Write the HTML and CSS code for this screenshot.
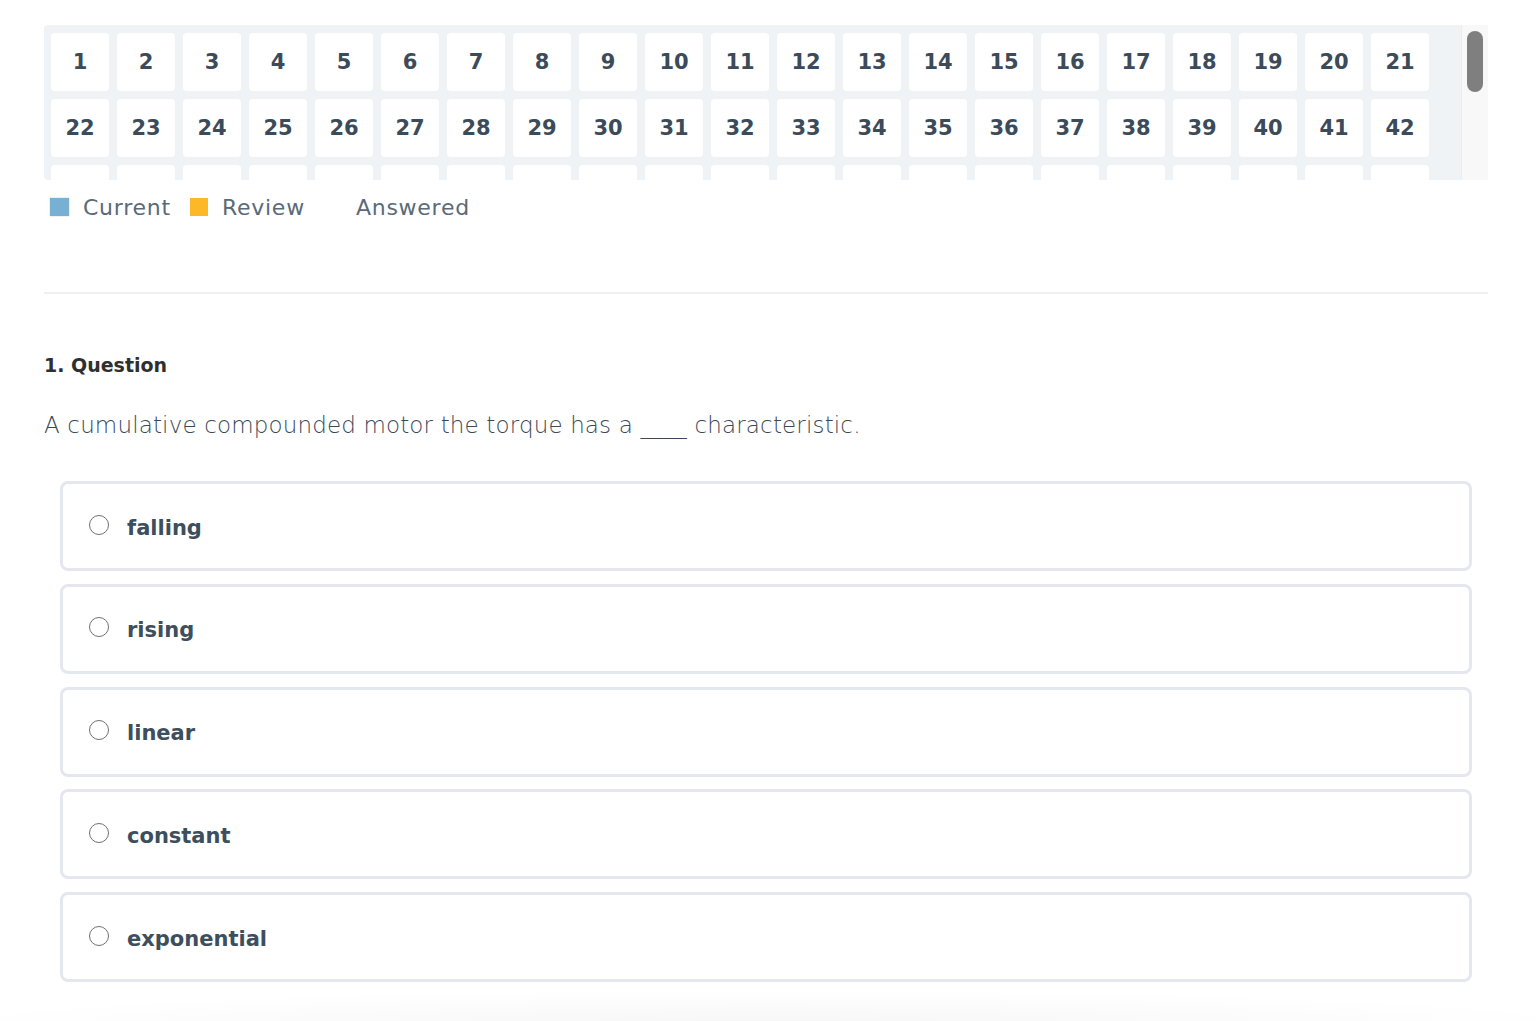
FILE: index.html
```html
<!DOCTYPE html>
<html lang="en">
<head>
    <meta charset="UTF-8">
    <meta name="viewport" content="width=device-width, initial-scale=1.0">
    <title>Quiz</title>
    <link rel="stylesheet" href="styles.css">
</head>
<body>
    <div class="page">
        <div class="palette">
            <ul class="palette-grid">
                <li>1</li><li>2</li><li>3</li><li>4</li><li>5</li><li>6</li><li>7</li>
                <li>8</li><li>9</li><li>10</li><li>11</li><li>12</li><li>13</li><li>14</li>
                <li>15</li><li>16</li><li>17</li><li>18</li><li>19</li><li>20</li><li>21</li>
                <li>22</li><li>23</li><li>24</li><li>25</li><li>26</li><li>27</li><li>28</li>
                <li>29</li><li>30</li><li>31</li><li>32</li><li>33</li><li>34</li><li>35</li>
                <li>36</li><li>37</li><li>38</li><li>39</li><li>40</li><li>41</li><li>42</li>
                <!-- third row only peeks out above the fold of the scroll box -->
                <li></li><li></li><li></li><li></li><li></li><li></li><li></li>
                <li></li><li></li><li></li><li></li><li></li><li></li><li></li>
                <li></li><li></li><li></li><li></li><li></li><li></li><li></li>
            </ul>
            <div class="palette-scroll"><div class="palette-thumb"></div></div>
        </div>

        <div class="legend">
            <span class="legend-box current"></span><span class="legend-label">Current</span>
            <span class="legend-box review"></span><span class="legend-label">Review</span>
            <span class="legend-box answered"></span><span class="legend-label">Answered</span>
        </div>

        <div class="divider"></div>

        <div class="question">
            <h2 class="question-title">1. Question</h2>
            <p class="question-text">A cumulative compounded motor the torque has a ____ characteristic.</p>

            <ul class="answers">
                <li class="answer"><span class="radio"></span><span class="answer-label">falling</span></li>
                <li class="answer"><span class="radio"></span><span class="answer-label">rising</span></li>
                <li class="answer"><span class="radio"></span><span class="answer-label">linear</span></li>
                <li class="answer"><span class="radio"></span><span class="answer-label">constant</span></li>
                <li class="answer"><span class="radio"></span><span class="answer-label">exponential</span></li>
            </ul>
        </div>

        <div class="footer-shade"></div>
    </div>
</body>
</html>
```

FILE: styles.css
```css
body {
    margin: 0;
    font-family: 'DejaVu Sans', 'Open Sans', sans-serif;
    background-color: #ffffff;
    color: #3c4d5c;
    overflow: hidden;
}

.page {
    padding: 25px 48px 0 44px;
}

/* --- Question palette --- */
.palette {
    display: flex;
    height: 155px;
    background-color: #f0f3f6;
    border-radius: 4px 0 0 4px;
}

.palette-grid {
    flex: 1;
    list-style: none;
    margin: 0;
    padding: 8px 0 0 7px;
    display: flex;
    flex-wrap: wrap;
    align-content: flex-start;
    gap: 8px;
    overflow: hidden;
}

.palette-grid li {
    width: 58px;
    height: 58px;
    background-color: #ffffff;
    border-radius: 4px;
    display: flex;
    align-items: center;
    justify-content: center;
    font-size: 21px;
    font-weight: 700;
    color: #3b4b5a;
}

.palette-scroll {
    width: 26px;
    background-color: #f8f8f8;
    border-left: 1px solid #ececec;
}

.palette-thumb {
    width: 16px;
    height: 61px;
    margin: 6px 0 0 5px;
    border-radius: 8px;
    background-color: #7f7f7f;
}

/* --- Legend --- */
.legend {
    display: flex;
    align-items: center;
    height: 30px;
    margin-top: 12px;
    padding-left: 6px;
    font-size: 22px;
    letter-spacing: 0.75px;
    color: #5a6a78;
}

.legend-box {
    width: 18px;
    height: 18px;
    margin-right: 14px;
}

.legend-box.current {
    width: 19px;
    background-color: #7aafd4;
    box-shadow: 0 0 1px rgba(0, 0, 0, 0.35);
}

.legend-box.review {
    background-color: #fdb827;
}

.legend-box.answered {
    background-color: #ffffff;
}

.legend-label {
    margin-right: 19px;
}

.divider {
    height: 2px;
    margin-top: 70px;
    background-color: #eef0f3;
}

/* --- Question --- */
.question-title {
    margin: 57px 0 0 0;
    font-size: 19px;
    line-height: 28px;
    font-weight: 700;
    color: #2f2f2f;
}

.question-text {
    margin: 30px 0 0 0;
    font-size: 23px;
    line-height: 32px;
    font-weight: 300;
    letter-spacing: 0.15px;
    color: #3a4957;
}

.answers {
    list-style: none;
    margin: 40px 16px 0 16px;
    padding: 0;
    display: flex;
    flex-direction: column;
    gap: 12.75px;
}

.answer {
    height: 90px;
    box-sizing: border-box;
    border: 3px solid #e4e8ee;
    border-radius: 8px;
    display: flex;
    align-items: center;
    padding-left: 26px;
    background-color: #ffffff;
}

.radio {
    width: 20px;
    height: 20px;
    box-sizing: border-box;
    border: 1.5px solid #707070;
    border-radius: 50%;
    margin-right: 18px;
    margin-top: -3px;
}

.answer-label {
    font-size: 21px;
    font-weight: 700;
    color: #3d4e5d;
    padding-top: 3px;
}

.footer-shade {
    height: 34px;
    margin: 8px -48px 0 -44px;
    background: radial-gradient(ellipse 55% 100% at 50% 100%, rgba(0, 0, 0, 0.035), rgba(0, 0, 0, 0) 100%);
}
```
